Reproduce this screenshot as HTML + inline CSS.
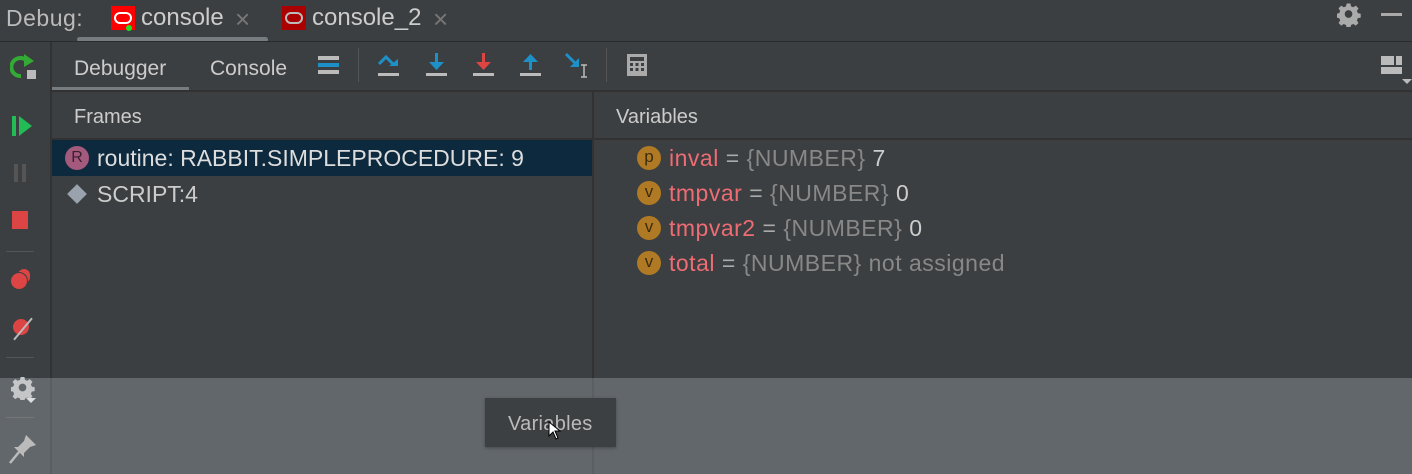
<!DOCTYPE html>
<html><head><style>
*{margin:0;padding:0;box-sizing:border-box}
body{width:1412px;height:474px;background:#3c3f41;font-family:"Liberation Sans",sans-serif;color:#bbb;position:relative;overflow:hidden}
.a{position:absolute}
.t{font-size:21px;white-space:nowrap}
</style></head><body>
<!-- top bar -->
<div class="a t" style="left:6px;top:5px;color:#bbb;font-size:23px;letter-spacing:0.5px">Debug:</div>
<div class="a" style="left:111px;top:6px;width:24px;height:24px;background:#f00"></div>
<div class="a" style="left:114px;top:12px;width:18px;height:12px;border:2.5px solid #fff;border-radius:6px"></div>
<div class="a t" style="left:141px;top:4px;font-size:24px;color:#ccc">console</div>
<div class="a t" style="left:235px;top:4px;font-size:26px;color:#777">×</div>
<div class="a" style="left:282px;top:6px;width:24px;height:24px;background:#a00"></div>
<div class="a" style="left:285px;top:12px;width:18px;height:12px;border:2.5px solid #bbb;border-radius:6px"></div>
<div class="a t" style="left:312px;top:4px;font-size:24px;color:#ccc">console_2</div>
<div class="a t" style="left:433px;top:4px;font-size:26px;color:#777">×</div>
<div class="a" style="left:77px;top:37px;width:191px;height:5px;border-radius:3px;background:#777c80"></div>
<svg class="a" style="left:1337px;top:3px" width="24" height="24" viewBox="0 0 24 24"><path fill="#aaa" fill-rule="evenodd" d="M10 1h4l.6 3 2.4 1 2.6-1.7 2.8 2.8L20.7 8.7l1 2.4 3 .6v4l-3 .6-1 2.4 1.7 2.6-2.8 2.8-2.6-1.7-2.4 1-.6 3h-4l-.6-3-2.4-1-2.6 1.7-2.8-2.8 1.7-2.6-1-2.4-3-.6v-4l3-.6 1-2.4L1.6 6.1 4.4 3.3 7 5l2.4-1z M12 8a4 4 0 1 0 0 8a4 4 0 1 0 0-8z" transform="translate(0,-.5) scale(.96)"/></svg>
<div class="a" style="left:1381px;top:13px;width:21px;height:3px;background:#aaa"></div>
<div class="a" style="left:0;top:41px;width:1412px;height:1px;background:#2b2b2b"></div>
<!-- left toolbar -->
<div class="a" style="left:50px;top:42px;width:2px;height:432px;background:#323232"></div>
<svg class="a" style="left:10px;top:52px" width="30" height="30"><path d="M16 8 A9 9 0 1 0 11 24" stroke="#3a3" stroke-width="4" fill="none"/><path d="M14 2 L24 9 L14 15Z" fill="#3a3"/><rect x="17" y="18" width="9" height="9" fill="#bbb"/></svg>
<svg class="a" style="left:12px;top:114px" width="26" height="26"><rect x="0" y="2" width="4" height="20" fill="#2b5"/><path d="M7 2 L20 12 L7 22Z" fill="#2b5"/></svg>
<div class="a" style="left:14px;top:164px;width:4px;height:18px;background:#555"></div>
<div class="a" style="left:22px;top:164px;width:4px;height:18px;background:#555"></div>
<div class="a" style="left:12px;top:211px;width:16px;height:18px;background:#d44"></div>
<div class="a" style="left:6px;top:251px;width:28px;height:1px;background:#555"></div>
<div class="a" style="left:18px;top:269px;width:12px;height:14px;border-radius:7px;background:#d44"></div>
<div class="a" style="left:11px;top:273px;width:16px;height:16px;border-radius:8px;background:#d44;box-shadow:0 0 0 1px #3c3f41"></div>
<div class="a" style="left:13px;top:319px;width:16px;height:16px;border-radius:8px;background:#d44"></div>
<div class="a" style="left:22px;top:315px;width:2px;height:28px;background:#bbb;transform:rotate(40deg)"></div>
<div class="a" style="left:6px;top:357px;width:28px;height:1px;background:#555"></div>
<!-- tabs toolbar -->
<div class="a t" style="left:74px;top:57px;color:#ccc">Debugger</div>
<div class="a t" style="left:210px;top:57px;color:#ccc">Console</div>
<div class="a" style="left:52px;top:87px;width:137px;height:4px;background:#777c80"></div>
<div class="a" style="left:318px;top:56px;width:21px;height:4px;background:#bbb"></div>
<div class="a" style="left:318px;top:63px;width:21px;height:4px;background:#1e90c8"></div>
<div class="a" style="left:318px;top:70px;width:21px;height:4px;background:#bbb"></div>
<div class="a" style="left:358px;top:48px;width:1px;height:34px;background:#555"></div>
<svg class="a" style="left:376px;top:52px" width="26" height="26"><path d="M3 12 L10 5 L18 13" stroke="#1e90c8" stroke-width="3" fill="none"/><path d="M13 14 L22 14 L22 7Z" fill="#1e90c8"/><rect x="2" y="21" width="21" height="3" fill="#bbb"/></svg>
<svg class="a" style="left:424px;top:52px" width="26" height="26"><rect x="11" y="1" width="3" height="10" fill="#1e90c8"/><path d="M5 10 L20 10 L12.5 18Z" fill="#1e90c8"/><rect x="2" y="21" width="21" height="3" fill="#bbb"/></svg>
<svg class="a" style="left:471px;top:52px" width="26" height="26"><rect x="11" y="1" width="3" height="10" fill="#d44"/><path d="M5 10 L20 10 L12.5 18Z" fill="#d44"/><rect x="2" y="21" width="21" height="3" fill="#bbb"/></svg>
<svg class="a" style="left:518px;top:52px" width="26" height="26"><rect x="11" y="8" width="3" height="10" fill="#1e90c8"/><path d="M5 10 L20 10 L12.5 2Z" fill="#1e90c8"/><rect x="2" y="21" width="21" height="3" fill="#bbb"/></svg>
<svg class="a" style="left:564px;top:52px" width="30" height="28"><path d="M2 2 L12 12" stroke="#1e90c8" stroke-width="3"/><path d="M6 15 L15 15 L15 6Z" fill="#1e90c8"/><path d="M17 13 H23 M20 13 V25 M17 25 H23" stroke="#bbb" stroke-width="1.5"/></svg>
<div class="a" style="left:606px;top:48px;width:1px;height:34px;background:#555"></div>
<svg class="a" style="left:626px;top:53px" width="22" height="24"><rect x="1" y="1" width="20" height="22" fill="#aaa"/><rect x="4" y="4" width="14" height="4" fill="#3c3f41"/><g fill="#3c3f41"><rect x="4" y="10" width="3" height="3"/><rect x="9.5" y="10" width="3" height="3"/><rect x="15" y="10" width="3" height="3"/><rect x="4" y="15" width="3" height="3"/><rect x="9.5" y="15" width="3" height="3"/><rect x="15" y="15" width="3" height="3"/></g></svg>
<div class="a" style="left:1381px;top:56px;width:13px;height:9px;background:#bbb"></div>
<div class="a" style="left:1396px;top:56px;width:6px;height:9px;background:#bbb"></div>
<div class="a" style="left:1381px;top:67px;width:21px;height:7px;background:#bbb"></div>
<div class="a" style="left:1402px;top:79px;border:5px solid transparent;border-top:5px solid #bbb"></div>
<div class="a" style="left:52px;top:90px;width:1360px;height:2px;background:#323232"></div>
<!-- headers -->
<div class="a t" style="left:74px;top:106px;color:#ccc;font-size:20px">Frames</div>
<div class="a t" style="left:616px;top:106px;color:#ccc;font-size:20px">Variables</div>
<div class="a" style="left:592px;top:92px;width:2px;height:382px;background:#323232"></div>
<div class="a" style="left:52px;top:138px;width:1360px;height:2px;background:#323232"></div>
<!-- frames -->
<div class="a" style="left:52px;top:140px;width:540px;height:36px;background:#0d293e"></div>
<div class="a" style="left:65px;top:146px;width:24px;height:24px;border-radius:12px;background:#a35a7d;color:#3c2030;font-size:16px;text-align:center;line-height:24px">R</div>
<div class="a t" style="left:97px;top:145px;color:#ddd;font-size:23px">routine: RABBIT.SIMPLEPROCEDURE: 9</div>
<div class="a" style="left:70px;top:187px;width:14px;height:14px;background:#9aa3ad;transform:rotate(45deg)"></div>
<div class="a t" style="left:97px;top:181px;color:#ccc;font-size:23px">SCRIPT:4</div>
<!-- variables -->
<div class="a" style="left:637px;top:146px;width:24px;height:24px;border-radius:12px;background:#b07a25;color:#3c2c10;font-size:17px;text-align:center;line-height:22px">p</div>
<div class="a t" style="left:669px;top:145px;font-size:23px;letter-spacing:0.5px"><span style="color:#ee6c73">inval</span> <span style="color:#aaa">=</span> <span style="color:#888">{NUMBER}</span> <span style="color:#ccc">7</span></div>
<div class="a" style="left:637px;top:181px;width:24px;height:24px;border-radius:12px;background:#b07a25;color:#3c2c10;font-size:17px;text-align:center;line-height:22px">v</div>
<div class="a t" style="left:669px;top:180px;font-size:23px;letter-spacing:0.5px"><span style="color:#ee6c73">tmpvar</span> <span style="color:#aaa">=</span> <span style="color:#888">{NUMBER}</span> <span style="color:#ccc">0</span></div>
<div class="a" style="left:637px;top:216px;width:24px;height:24px;border-radius:12px;background:#b07a25;color:#3c2c10;font-size:17px;text-align:center;line-height:22px">v</div>
<div class="a t" style="left:669px;top:215px;font-size:23px;letter-spacing:0.5px"><span style="color:#ee6c73">tmpvar2</span> <span style="color:#aaa">=</span> <span style="color:#888">{NUMBER}</span> <span style="color:#ccc">0</span></div>
<div class="a" style="left:637px;top:251px;width:24px;height:24px;border-radius:12px;background:#b07a25;color:#3c2c10;font-size:17px;text-align:center;line-height:22px">v</div>
<div class="a t" style="left:669px;top:250px;font-size:23px;letter-spacing:0.5px"><span style="color:#ee6c73">total</span> <span style="color:#aaa">=</span> <span style="color:#888">{NUMBER} not assigned</span></div>
<!-- overlay -->
<div class="a" style="left:0;top:378px;width:1412px;height:96px;background:rgba(160,168,175,0.38)"></div>
<svg class="a" style="left:11px;top:376px" width="24" height="24" viewBox="0 0 24 24"><path fill="#c4c6c8" fill-rule="evenodd" d="M10 1h4l.6 3 2.4 1 2.6-1.7 2.8 2.8L20.7 8.7l1 2.4 3 .6v4l-3 .6-1 2.4 1.7 2.6-2.8 2.8-2.6-1.7-2.4 1-.6 3h-4l-.6-3-2.4-1-2.6 1.7-2.8-2.8 1.7-2.6-1-2.4-3-.6v-4l3-.6 1-2.4L1.6 6.1 4.4 3.3 7 5l2.4-1z M12 8a4 4 0 1 0 0 8a4 4 0 1 0 0-8z" transform="scale(.96)"/></svg>
<div class="a" style="left:26px;top:398px;border:5px solid transparent;border-top:5px solid #ddd"></div>
<div class="a" style="left:6px;top:417px;width:28px;height:1px;background:#777"></div>
<svg class="a" style="left:8px;top:433px" width="30" height="32"><path d="M18 2 L28 12 L22 14 L16 20 L16 24 L6 14 L10 14 L16 8Z" fill="#bbb"/><path d="M11 19 L2 30" stroke="#bbb" stroke-width="2.5"/></svg>
<div class="a" style="left:485px;top:398px;width:131px;height:49px;background:#3d4043;box-shadow:0 1px 3px rgba(0,0,0,.3)"></div>
<div class="a t" style="left:508px;top:413px;color:#bbb;font-size:20px;letter-spacing:0.3px">Variables</div>
<svg class="a" style="left:548px;top:421px" width="14" height="20"><path d="M1 1 L1 15 L5 11 L8 18 L10 17 L7 10 L12 10Z" fill="#fff" stroke="#000" stroke-width="1"/></svg>
<div class="a" style="left:126px;top:25px;width:6px;height:6px;border-radius:3px;background:#2d2"></div>
</body></html>
